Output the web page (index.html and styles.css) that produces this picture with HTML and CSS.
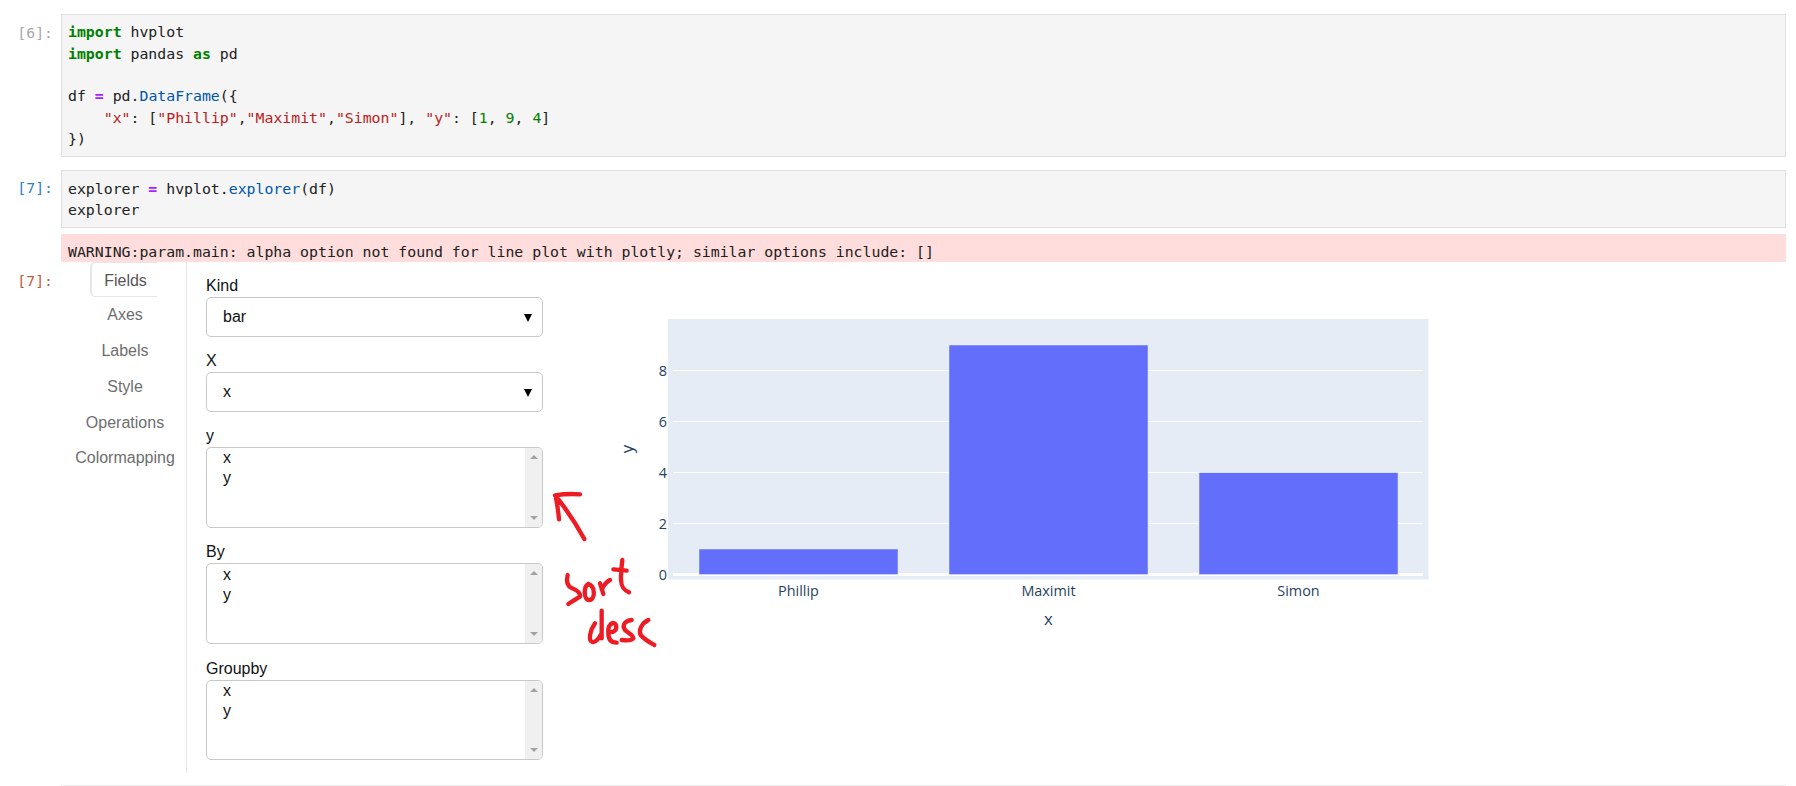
FILE: index.html
```html
<!DOCTYPE html>
<html lang="en">
<head>
<meta charset="utf-8">
<title>hvplot explorer</title>
<link rel="stylesheet" href="styles.css">
</head>
<body>
<main class="notebook">
  <section class="cell cell-first">
    <div class="prompt prompt-idle">[6]:</div>
    <pre class="code code-tall"><span class="kw">import</span> hvplot
<span class="kw">import</span> pandas <span class="kw">as</span> pd

df <span class="op">=</span> pd.<span class="prop">DataFrame</span>({
    <span class="str">"x"</span>: [<span class="str">"Phillip"</span>,<span class="str">"Maximit"</span>,<span class="str">"Simon"</span>], <span class="str">"y"</span>: [<span class="num">1</span>, <span class="num">9</span>, <span class="num">4</span>]
})</pre>
  </section>
  <section class="cell cell-second">
    <div class="prompt prompt-in">[7]:</div>
    <pre class="code code-short">explorer <span class="op">=</span> hvplot.<span class="prop">explorer</span>(df)
explorer</pre>
  </section>
  <section class="warning-row">
    <pre class="warning">WARNING:param.main: alpha option not found for line plot with plotly; similar options include: []</pre>
  </section>
  <section class="cell output">
    <div class="prompt prompt-out">[7]:</div>
    <div class="panel">
      <nav class="tabs">
        <div class="tab tab-active">Fields</div>
        <div class="tab">Axes</div>
        <div class="tab">Labels</div>
        <div class="tab">Style</div>
        <div class="tab">Operations</div>
        <div class="tab">Colormapping</div>
      </nav>
      <form class="fields">
        <div class="field">
          <div class="label">Kind</div>
          <div class="select">bar<span class="caret"></span></div>
        </div>
        <div class="field">
          <div class="label">X</div>
          <div class="select">x<span class="caret"></span></div>
        </div>
        <div class="field field-list">
          <div class="label">y</div>
          <div class="listbox">
            <div class="options"><div>x</div><div>y</div></div>
            <div class="scrollbar"><span class="sb-up"></span><span class="sb-down"></span></div>
          </div>
        </div>
        <div class="field field-list">
          <div class="label">By</div>
          <div class="listbox">
            <div class="options"><div>x</div><div>y</div></div>
            <div class="scrollbar"><span class="sb-up"></span><span class="sb-down"></span></div>
          </div>
        </div>
        <div class="field field-list">
          <div class="label">Groupby</div>
          <div class="listbox">
            <div class="options"><div>x</div><div>y</div></div>
            <div class="scrollbar"><span class="sb-up"></span><span class="sb-down"></span></div>
          </div>
        </div>
      </form>
      <svg class="chart" width="840" height="340" viewBox="600 300 840 340">
        <rect class="plot-bg" x="668" y="319" width="760.5" height="260.5"/>
        <g class="grid">
          <path d="M673 370.5H1423M673 421.5H1423M673 472.5H1423M673 523.5H1423"/>
        </g>
        <rect class="zero" x="673" y="573" width="750" height="3"/>
        <rect class="bar" x="699" y="549" width="199" height="25.5"/>
        <rect class="bar" x="949" y="345" width="199" height="229.5"/>
        <rect class="bar" x="1199" y="472.7" width="199" height="101.8"/>
        <g class="ticks ticks-y">
          <text x="667" y="376">8</text>
          <text x="667" y="427">6</text>
          <text x="667" y="478">4</text>
          <text x="667" y="529">2</text>
          <text x="667" y="580">0</text>
        </g>
        <g class="ticks ticks-x">
          <text x="798.5" y="596">Phillip</text>
          <text x="1048.5" y="596">Maximit</text>
          <text x="1298.5" y="596">Simon</text>
        </g>
        <text class="axis-title" x="1048.5" y="625">x</text>
        <text class="axis-title" transform="translate(633 449) rotate(-90)">y</text>
      </svg>
    </div>
  </section>
  <div class="end-rule"></div>
</main>
<svg class="scribble" width="150" height="190" viewBox="0 0 450 570">
  <path d="M75 76C100 72 125 71 150 73M78 84C82 105 85 125 87 148M85 88C110 120 140 165 163 207"/>
  <path d="M113 315C108 335 112 348 125 354C140 360 152 368 150 380C135 390 125 395 115 402"/>
  <path d="M175 342C160 350 160 390 178 390C195 390 198 350 175 342"/>
  <path d="M210 340C215 355 218 365 220 372M215 358C222 345 230 335 240 330"/>
  <path d="M277 270C275 290 272 310 273 330C274 350 280 360 297 367M250 298L290 302"/>
  <path d="M215 422L215 505M195 460C180 480 175 510 185 515C195 520 207 505 215 490"/>
  <path d="M235 485C250 490 262 480 258 465C250 450 232 465 235 490C235 510 245 518 260 518"/>
  <path d="M305 450C285 452 275 465 285 480C295 490 310 495 310 505C305 512 290 512 275 510"/>
  <path d="M355 450C335 460 325 480 332 495C345 510 360 518 373 525"/>
</svg>
</body>
</html>
```
FILE: styles.css
```css
html, body {
  margin: 0;
  padding: 0;
  height: 786px;
  overflow: hidden;
  background: #fff;
}

body {
  position: relative;
  font-family: "Liberation Sans", Arial, sans-serif;
  font-size: 16px;
  color: #111;
}

.notebook {
  padding: 14px 10px 0 0;
  display: flex;
  flex-direction: column;
}

.cell {
  display: flex;
}

.cell-first {
  height: 143px;
}

.cell-second {
  height: 58px;
  margin-top: 13px;
}

.prompt {
  flex: 0 0 53px;
  padding-right: 8px;
  font: 14.83px/21.33px "DejaVu Sans Mono", monospace;
  text-align: right;
  padding-top: 7px;
}

.prompt-idle { color: #a8a8a8; padding-top: 8px; }
.prompt-in { color: #307fc1; }
.prompt-out { color: #bf5b3d; padding-top: 8px; }

.code,
.warning {
  margin: 0;
  font: 14.83px/21.33px "DejaVu Sans Mono", monospace;
  color: #212121;
}

.code {
  flex: 1;
  box-sizing: border-box;
  background: #f5f5f5;
  border: 1px solid #e0e0e0;
  padding: 6.3px 6px;
}

.code-short {
  padding-top: 6.5px;
}

.kw { color: #008000; font-weight: bold; }
.op { color: #aa22ff; font-weight: bold; }
.prop { color: #0055aa; }
.str { color: #ba2121; }
.num { color: #008000; }

.warning-row {
  margin: 6px 0 0 61px;
}

.warning {
  box-sizing: border-box;
  height: 28px;
  padding: 6.5px 7px 0;
  overflow: hidden;
  background: #ffdddd;
}

.output {
  height: 523px;
}

.panel {
  flex: 1;
  display: flex;
  align-items: flex-start;
}

.tabs {
  box-sizing: border-box;
  flex: 0 0 123px;
  margin-left: 3px;
  height: 511px;
  border-right: 1px solid #e6e6e6;
  display: flex;
  flex-direction: column;
  align-items: center;
  width: 123px;
}

.tab {
  height: 36px;
  line-height: 36px;
  color: #6e6e6e;
  white-space: nowrap;
}

.tab:last-child {
  line-height: 34px;
}

.tab-active {
  box-sizing: border-box;
  align-self: flex-start;
  width: 67px;
  margin-left: 26px;
  padding-left: 2px;
  height: 35px;
  line-height: 35px;
  text-align: center;
  color: #555;
  border: 1px solid #e6e6e6;
  border-left-width: 2px;
  border-right: 0;
  border-radius: 5px 0 0 5px;
}

.fields {
  flex: 0 0 337px;
  margin: 0 0 0 19px;
  padding-top: 13px;
}

.field {
  margin-bottom: 13px;
}

.field-list {
  margin-bottom: 13.8px;
}

.label {
  height: 20px;
  line-height: 22px;
  margin-bottom: 2px;
  color: #111;
}

.select {
  box-sizing: border-box;
  position: relative;
  height: 40px;
  line-height: 38px;
  padding-left: 16px;
  border: 1px solid #c8c8c8;
  border-radius: 5px;
  color: #111;
}

.caret {
  position: absolute;
  top: 16px;
  right: 10px;
  width: 0;
  height: 0;
  border-left: 4.5px solid transparent;
  border-right: 4.5px solid transparent;
  border-top: 8px solid #000;
}

.listbox {
  box-sizing: border-box;
  display: flex;
  height: 80.6px;
  border: 1px solid #c8c8c8;
  border-radius: 5px;
  overflow: hidden;
}

.options {
  flex: 1;
  padding: 0.4px 0 0 16px;
  line-height: 20px;
  color: #111;
}

.scrollbar {
  box-sizing: border-box;
  flex: 0 0 17px;
  display: flex;
  flex-direction: column;
  justify-content: space-between;
  align-items: center;
  padding: 7px 0;
  background: #f0f0f0;
}

.sb-up,
.sb-down {
  width: 0;
  height: 0;
  border-left: 4px solid transparent;
  border-right: 4px solid transparent;
}

.sb-up { border-bottom: 4px solid #a3a3a3; }
.sb-down { border-top: 4px solid #a3a3a3; }

.chart {
  flex: none;
  display: block;
  margin: 38px 0 0 57px;
}

.plot-bg { fill: #e5ecf6; }
.grid path { fill: none; stroke: #fff; stroke-width: 1; }
.zero { fill: #fff; }
.bar { fill: #636efa; stroke: #e5ecf6; stroke-width: 0.5; }

.ticks text,
.axis-title {
  font-family: "Open Sans", sans-serif;
  font-size: 14.4px;
  fill: #2a3f5f;
}

.ticks-y text { text-anchor: end; }
.ticks-x text { text-anchor: middle; }

.axis-title {
  font-size: 16.8px;
  text-anchor: middle;
}

.end-rule {
  height: 1px;
  margin-left: 61px;
  background: #eeeeee;
}

.scribble {
  position: absolute;
  left: 530px;
  top: 470px;
}

.scribble path {
  fill: none;
  stroke: #ed1c24;
  stroke-width: 13;
  stroke-linecap: round;
  stroke-linejoin: round;
}
```
